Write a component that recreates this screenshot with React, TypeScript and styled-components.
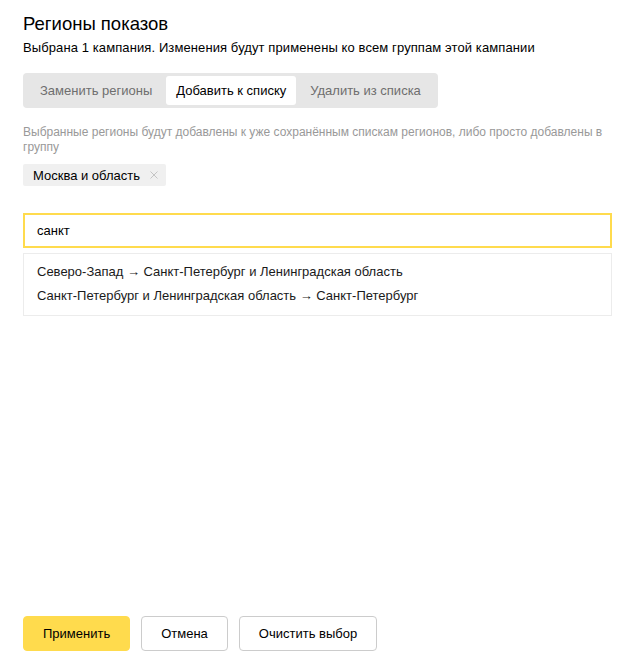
import styled, { createGlobalStyle } from "styled-components";

const GlobalStyle = createGlobalStyle`
  html, body {
    margin: 0;
    padding: 0;
    background: #ffffff;
  }
  body {
    font-family: "Liberation Sans", Arial, sans-serif;
    color: #000000;
  }
`;

const Page = styled.div`
  box-sizing: border-box;
  width: 636px;
  height: 662px;
  padding: 12px 24px 11px 23px;
  display: flex;
  flex-direction: column;
`;

const Title = styled.h1`
  margin: 0;
  font-size: 18.5px;
  font-weight: 400;
  line-height: 24px;
`;

const Subtitle = styled.div`
  margin-top: 4px;
  font-size: 13px;
  line-height: 16px;
  letter-spacing: 0.1px;
`;

const Tabs = styled.div`
  margin-top: 17px;
  align-self: flex-start;
  display: flex;
  padding: 3px;
  background: #e6e6e6;
  border-radius: 4px;
`;

const Tab = styled.div<{ active?: boolean }>`
  height: 29px;
  padding: 0 ${(p) => (p.active ? "10px" : "14px")};
  display: flex;
  align-items: center;
  font-size: 13px;
  border-radius: 3px;
  color: ${(p) => (p.active ? "#000000" : "#6e6e6e")};
  background: ${(p) => (p.active ? "#ffffff" : "transparent")};
`;

const Hint = styled.div`
  margin-top: 17px;
  font-size: 12px;
  line-height: 15px;
  color: #999999;
`;

const Chips = styled.div`
  margin-top: 9px;
  display: flex;
`;

const Chip = styled.div`
  height: 22px;
  padding: 0 8px 0 10px;
  display: flex;
  align-items: center;
  gap: 10px;
  background: #f0f0f0;
  border-radius: 2px;
  font-size: 13px;
`;

const ChipClose = styled.svg`
  width: 8px;
  height: 8px;
`;

const SearchInput = styled.div`
  margin-top: 27px;
  box-sizing: border-box;
  height: 35px;
  border: 2px solid #ffdb4d;
  padding: 0 12px;
  display: flex;
  align-items: center;
  font-size: 13px;
`;

const Suggest = styled.div`
  margin-top: 5px;
  box-sizing: border-box;
  border: 1px solid #ececec;
  padding: 6px 13px 7px;
  display: flex;
  flex-direction: column;
`;

const SuggestItem = styled.div`
  font-size: 13px;
  line-height: 24px;
  color: #1a1a1a;
`;

const Footer = styled.div`
  margin-top: auto;
  display: flex;
  gap: 11px;
`;

const Button = styled.button<{ primary?: boolean }>`
  box-sizing: border-box;
  height: 35px;
  padding: 0 19px;
  font-family: "Liberation Sans", Arial, sans-serif;
  font-size: 13px;
  color: #000000;
  border-radius: 4px;
  border: 1px solid ${(p) => (p.primary ? "#ffdb4d" : "#cccccc")};
  background: ${(p) => (p.primary ? "#ffdb4d" : "#ffffff")};
  cursor: pointer;
`;

export default function App() {
  return (
    <Page>
      <GlobalStyle />
      <Title>Регионы показов</Title>
      <Subtitle>
        Выбрана 1 кампания. Изменения будут применены ко всем группам этой
        кампании
      </Subtitle>
      <Tabs>
        <Tab>Заменить регионы</Tab>
        <Tab active>Добавить к списку</Tab>
        <Tab>Удалить из списка</Tab>
      </Tabs>
      <Hint>
        Выбранные регионы будут добавлены к уже сохранённым спискам регионов,
        либо просто добавлены в группу
      </Hint>
      <Chips>
        <Chip>
          Москва и область
          <ChipClose viewBox="0 0 8 8">
            <path d="M0.5 0.5L7.5 7.5M7.5 0.5L0.5 7.5" stroke="#c4c4c4" strokeWidth="1" />
          </ChipClose>
        </Chip>
      </Chips>
      <SearchInput>санкт</SearchInput>
      <Suggest>
        <SuggestItem>Северо-Запад → Санкт-Петербург и Ленинградская область</SuggestItem>
        <SuggestItem>Санкт-Петербург и Ленинградская область → Санкт-Петербург</SuggestItem>
      </Suggest>
      <Footer>
        <Button primary>Применить</Button>
        <Button>Отмена</Button>
        <Button>Очистить выбор</Button>
      </Footer>
    </Page>
  );
}
